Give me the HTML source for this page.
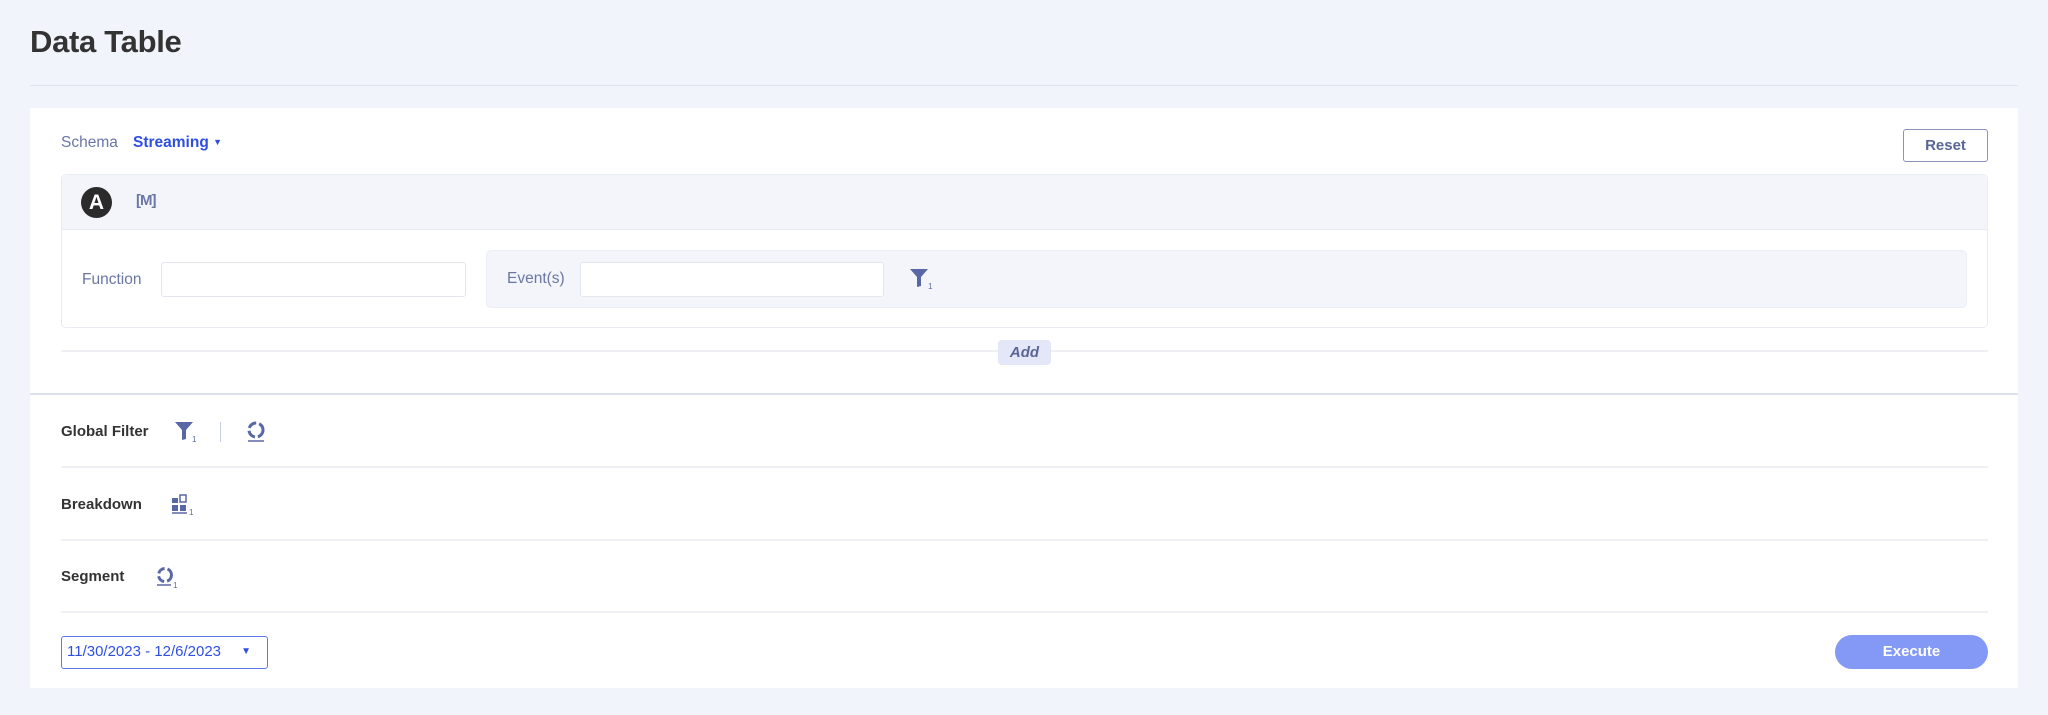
<!DOCTYPE html>
<html><head><meta charset="utf-8"><style>
*{box-sizing:border-box;margin:0;padding:0}
body{width:2048px;height:715px;background:#f1f4fb;font-family:"Liberation Sans",sans-serif;position:relative;overflow:hidden;color:#333}
.abs{position:absolute}
h1{position:absolute;left:30px;top:24px;font-size:31px;font-weight:bold;color:#333;letter-spacing:-0.3px}
.card{position:absolute;left:30px;top:108px;width:1988px;height:580px;background:#fff}
.lbl{font-size:15.5px;color:#6a76a6}
.bl{font-size:15px;color:#333;font-weight:bold}
.hl{position:absolute;height:2px;background:#eef0f5}
</style></head><body>
<h1>Data Table</h1>
<div class="abs" style="left:30px;top:85px;width:1988px;height:1px;background:#dfe3ee"></div>
<div class="card"></div>
<div class="abs lbl" style="left:61px;top:134px">Schema</div>
<div class="abs" style="left:133px;top:134px;font-size:15.5px;font-weight:bold;color:#2f4fe0">Streaming <span style="font-size:9px;position:relative;top:-2px">▼</span></div>
<div class="abs" style="left:1903px;top:129px;width:85px;height:33px;border:1px solid #8a94b8;border-radius:3px;color:#5b6596;font-size:15px;font-weight:bold;text-align:center;line-height:31px">Reset</div>
<div class="abs" style="left:61px;top:174px;width:1927px;height:154px;border:1px solid #e8ebf3;border-radius:5px;background:#fff"></div>
<div class="abs" style="left:62px;top:175px;width:1925px;height:55px;background:#f4f5fb;border-bottom:1px solid #e8ebf3;border-radius:5px 5px 0 0"></div>
<div class="abs" style="left:81px;top:187px;width:31px;height:31px;border-radius:50%;background:#2b2b2b;color:#fff;font-weight:bold;font-size:21px;text-align:center;line-height:31px">A</div>
<div class="abs" style="left:136px;top:192px;font-size:15px;font-weight:bold;color:#6a76a6;letter-spacing:-1px">[M]</div>
<div class="abs lbl" style="left:82px;top:271px">Function</div>
<div class="abs" style="left:161px;top:262px;width:305px;height:35px;border:1px solid #e3e6ef;border-radius:3px;background:#fff"></div>
<div class="abs" style="left:486px;top:250px;width:1481px;height:58px;background:#f4f5fb;border:1px solid #eceef5;border-radius:5px"></div>
<div class="abs lbl" style="left:507px;top:270px">Event(s)</div>
<div class="abs" style="left:580px;top:262px;width:304px;height:35px;border:1px solid #e3e6ef;border-radius:3px;background:#fff"></div>
<svg class="abs" style="left:909px;top:268px" width="26" height="22" viewBox="0 0 26 22"><path d="M1 1h18l-7 8v9l-4 1V9z" fill="#5a67a5"/><text x="19" y="21" font-size="8" fill="#5a67a5" font-family="Liberation Sans">1</text></svg>
<div class="hl" style="left:61px;top:350px;width:1927px"></div>
<div class="abs" style="left:998px;top:340px;width:53px;height:25px;background:#e3e7f7;border-radius:4px;color:#5b6596;font-style:italic;font-weight:bold;font-size:15px;text-align:center;line-height:25px">Add</div>
<div class="abs" style="left:30px;top:393px;width:1988px;height:2px;background:#dde1ee"></div>
<div class="abs bl" style="left:61px;top:423px">Global Filter</div>
<svg class="abs" style="left:174px;top:421px" width="24" height="22" viewBox="0 0 24 22"><path d="M1 1h18l-7 8v9l-4 1V9z" fill="#5a67a5"/><text x="18" y="21" font-size="8" fill="#5a67a5" font-family="Liberation Sans">1</text></svg>
<div class="abs" style="left:220px;top:422px;width:1px;height:20px;background:#c7cce0"></div>
<svg class="abs" style="left:245px;top:421px" width="22" height="22" viewBox="0 0 22 22"><circle cx="11" cy="9" r="7" fill="none" stroke="#5a67a5" stroke-width="3" stroke-dasharray="9 3"/><path d="M3 20h16" stroke="#5a67a5" stroke-width="1.5"/></svg>
<div class="hl" style="left:61px;top:466px;width:1927px"></div>
<div class="abs bl" style="left:61px;top:496px">Breakdown</div>
<svg class="abs" style="left:171px;top:493px" width="24" height="24" viewBox="0 0 24 24"><rect x="1" y="5" width="6" height="5" fill="#5a67a5"/><rect x="9" y="2" width="6" height="7" fill="none" stroke="#5a67a5" stroke-width="1.5"/><rect x="1" y="12" width="6" height="6" fill="#5a67a5"/><rect x="9" y="12" width="6" height="6" fill="#5a67a5"/><path d="M1 20h15" stroke="#5a67a5" stroke-width="1.5"/><text x="18" y="22" font-size="8" fill="#5a67a5" font-family="Liberation Sans">1</text></svg>
<div class="hl" style="left:61px;top:539px;width:1927px"></div>
<div class="abs bl" style="left:61px;top:568px">Segment</div>
<svg class="abs" style="left:155px;top:566px" width="24" height="24" viewBox="0 0 24 24"><circle cx="10" cy="9" r="6.5" fill="none" stroke="#5a67a5" stroke-width="3" stroke-dasharray="8 3"/><path d="M2 19h14" stroke="#5a67a5" stroke-width="1.5"/><text x="18" y="22" font-size="8" fill="#5a67a5" font-family="Liberation Sans">1</text></svg>
<div class="hl" style="left:61px;top:611px;width:1927px"></div>
<div class="abs" style="left:61px;top:636px;width:207px;height:33px;border:1.5px solid #5d78f0;border-radius:3px;color:#2f4fe0;font-size:15px;line-height:30px;padding-left:5px">11/30/2023 - 12/6/2023<span style="position:absolute;right:16px;font-size:10px">▼</span></div>
<div class="abs" style="left:1835px;top:635px;width:153px;height:34px;background:#8499f5;border-radius:17px;color:#fff;font-size:15px;font-weight:bold;text-align:center;line-height:34px">Execute</div>
</body></html>
